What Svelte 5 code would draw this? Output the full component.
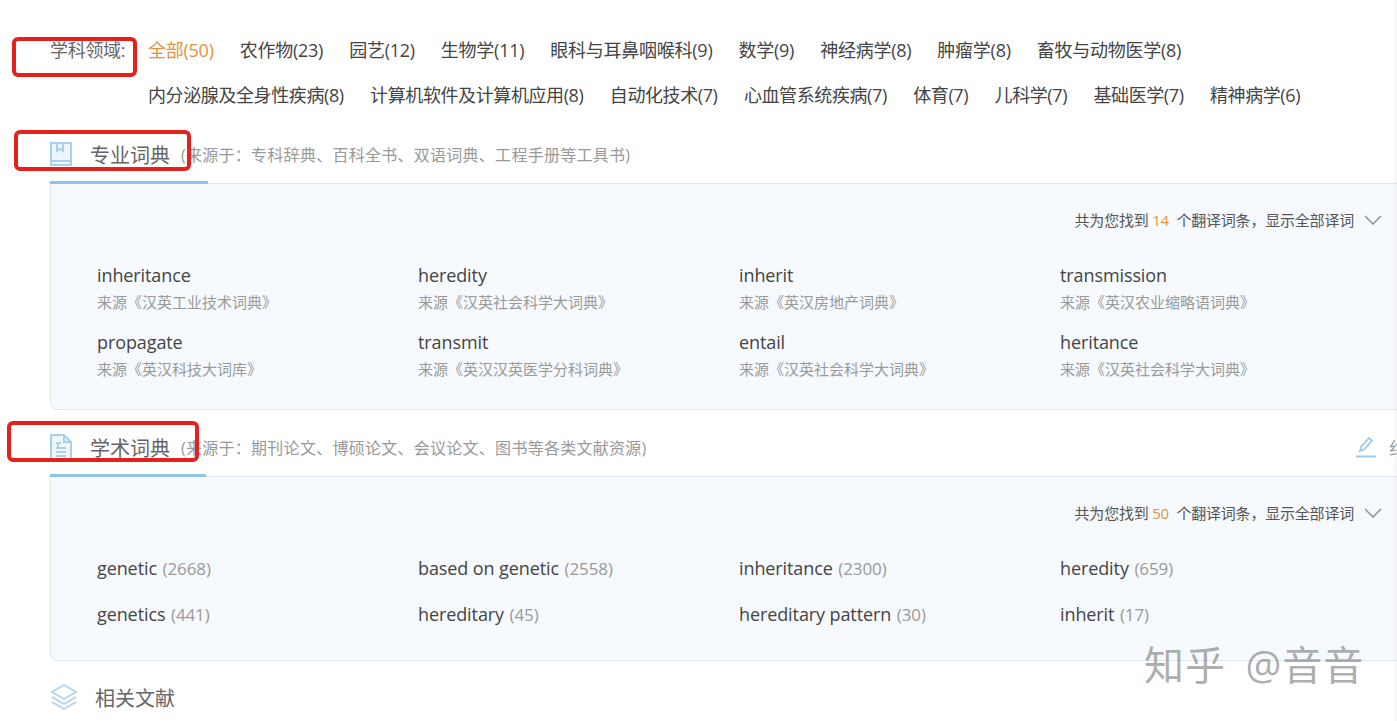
<script>
  const row1 = [['全部',50],['农作物',23],['园艺',12],['生物学',11],['眼科与耳鼻咽喉科',9],['数学',9],['神经病学',8],['肿瘤学',8],['畜牧与动物医学',8]];
  const row2 = [['内分泌腺及全身性疾病',8],['计算机软件及计算机应用',8],['自动化技术',7],['心血管系统疾病',7],['体育',7],['儿科学',7],['基础医学',7],['精神病学',6]];
  const dict = [
    ['inheritance','来源《汉英工业技术词典》'],['heredity','来源《汉英社会科学大词典》'],['inherit','来源《英汉房地产词典》'],['transmission','来源《英汉农业缩略语词典》'],
    ['propagate','来源《英汉科技大词库》'],['transmit','来源《英汉汉英医学分科词典》'],['entail','来源《汉英社会科学大词典》'],['heritance','来源《汉英社会科学大词典》']
  ];
  const terms = [['genetic',2668],['based on genetic',2558],['inheritance',2300],['heredity',659],['genetics',441],['hereditary',45],['hereditary pattern',30],['inherit',17]];
</script>

<div class="page">
  <div class="filter">
    <div class="label">学科领域:</div>
    <div class="rows">
      <div class="row r1">
        {#each row1 as [name, n], i}
          <span class:on={i===0}>{name}({n})</span>
        {/each}
      </div>
      <div class="row r2">
        {#each row2 as [name, n]}
          <span>{name}({n})</span>
        {/each}
      </div>
    </div>
  </div>

  <div class="head first">
    <svg class="ico" width="22" height="24" viewBox="0 0 22 24" fill="none" stroke="#a9cfec" stroke-width="2">
      <path d="M1 1h20v22H1z" fill="#eef5fb"/>
      <path d="M7 1v8l3-2 3 2V1" />
      <path d="M1 19h20" />
    </svg>
    <h2>专业词典</h2>
    <span class="src">(来源于：专科辞典、百科全书、双语词典、工程手册等工具书)</span>
  </div>
  <div class="panel one">
    <i class="tab t1"></i>
    <div class="total">
      <span>共为您找到 <b>14</b> &nbsp;个翻译词条，显示全部译词</span>
      <svg width="18" height="10" viewBox="0 0 18 10" fill="none" stroke="#8f959b" stroke-width="1.6"><path d="M1 1l8 8 8-8"/></svg>
    </div>
    <div class="grid dict">
      {#each dict as [w, s]}
        <div class="cell"><div class="w">{w}</div><div class="s">{s}</div></div>
      {/each}
    </div>
  </div>

  <div class="head second">
    <svg class="ico" width="22" height="26" viewBox="0 0 22 26" fill="none" stroke="#a9cfec" stroke-width="2">
      <path d="M1 1h13l7 7v17H1z" fill="#eef5fb"/>
      <path d="M14 1v7h7M6 9h5M8 9v4M6 14h10M6 18h10M6 22h10"/>
    </svg>
    <h2>学术词典</h2>
    <span class="src">(来源于：期刊论文、博硕论文、会议论文、图书等各类文献资源)</span>
    <div class="edit">
      <svg width="20" height="22" viewBox="0 0 20 22" fill="none" stroke="#9ccbeb" stroke-width="1.8">
        <path d="M4 15l1-4 8-9 3 2.5-8 9z"/>
        <path d="M0 20.5h20" stroke-width="2"/>
      </svg>
      <span>纠</span>
    </div>
  </div>
  <div class="panel two">
    <i class="tab t2"></i>
    <div class="total">
      <span>共为您找到 <b>50</b> &nbsp;个翻译词条，显示全部译词</span>
      <svg width="18" height="10" viewBox="0 0 18 10" fill="none" stroke="#8f959b" stroke-width="1.6"><path d="M1 1l8 8 8-8"/></svg>
    </div>
    <div class="grid terms">
      {#each terms as [w, n]}
        <div class="w">{w} <em>({n})</em></div>
      {/each}
    </div>
  </div>

  <div class="head third">
    <svg class="ico" width="28" height="28" viewBox="0 0 28 28" fill="none" stroke="#b3d3ee" stroke-width="1.8">
      <path d="M14 2l12 7-12 7L2 9z"/>
      <path d="M2 14l12 7 12-7"/>
      <path d="M2 19l12 7 12-7"/>
    </svg>
    <h2>相关文献</h2>
  </div>

  <div class="mark m1"></div>
  <div class="mark m2"></div>
  <div class="mark m3"></div>
  <div class="zhihu">知乎 @<span>音音</span></div>
  <div class="edge"></div>
</div>

<style>
  :global(body) { margin: 0; background: #fff; }
  .page {
    position: relative;
    width: 1397px;
    height: 721px;
    overflow: hidden;
    box-sizing: border-box;
    padding: 28px 0 0 50px;
    font-family: "Open Sans", "Noto Sans CJK SC", sans-serif;
    color: #444;
  }
  .filter { display: flex; font-size: 18px; line-height: 45px; }
  .label { width: 98px; color: #666; letter-spacing: -0.3px; }
  .row { display: flex; gap: 26px; white-space: nowrap; }
  .r1 { letter-spacing: -0.25px; }
  .r2 { letter-spacing: -0.4px; gap: 26.4px; }
  .on { color: #de9343; }

  .head { display: flex; align-items: center; height: 40px; }
  .head h2 { margin: 0; font-size: 20px; font-weight: 400; color: #666; }
  .head .ico { flex: none; }
  .src { margin-left: 11px; font-size: 16px; color: #999; letter-spacing: 0.27px; }
  .first { margin-top: 16px; }
  .first h2 { margin-left: 18px; }
  .second { margin-top: 17px; }
  .second h2 { margin-left: 18px; }
  .third { margin-top: 16px; }
  .third h2 { margin-left: 17px; }
  .edit { position: absolute; left: 1356px; display: flex; align-items: center; gap: 13px; color: #999; font-size: 18px; }

  .panel {
    position: relative;
    box-sizing: border-box;
    width: 1360px;
    background: #f6fafe;
    border: 1px solid #e1e6eb;
    border-radius: 0 0 0 8px;
  }
  .panel.one { height: 227px; margin-top: 9px; }
  .panel.two { height: 185px; margin-top: 9px; }
  .tab { position: absolute; left: -1px; top: -3px; height: 3px; background: #8fc3e8; }
  .t1 { width: 158px; }
  .t2 { width: 156px; }
  .total {
    display: flex;
    align-items: center;
    justify-content: flex-end;
    padding: 25px 0 0 0;
    width: 1331px;
    font-size: 15px;
    line-height: 22px;
    letter-spacing: -0.2px;
    color: #555;
    white-space: pre;
  }
  .total b { font-weight: 400; color: #de9343; }
  .total svg { margin-left: 10px; }

  .grid { display: grid; grid-template-columns: repeat(4, 321px); padding-left: 46px; }
  .dict { margin-top: 29px; row-gap: 13px; }
  .terms { margin-top: 29px; row-gap: 15px; }
  .w { font-size: 18px; line-height: 30px; color: #444; letter-spacing: -0.1px; }
  .w em { font-style: normal; font-size: 17px; color: #999; margin-left: 1px; }
  .s { font-size: 15px; line-height: 24px; color: #999; }

  .mark { position: absolute; border: 4px solid #e5211d; border-radius: 6px; box-sizing: border-box; }
  .m1 { left: 12px; top: 37px; width: 125px; height: 40px; }
  .m2 { left: 14px; top: 130px; width: 177px; height: 41px; }
  .m3 { left: 7px; top: 421px; width: 192px; height: 41px; }

  .zhihu {
    position: absolute;
    left: 1144px;
    top: 642px;
    font-size: 40px;
    line-height: 46px;
    letter-spacing: 1px;
    word-spacing: 8px;
    color: rgba(120, 120, 120, 0.6);
    white-space: nowrap;
  }
  .edge { position: absolute; right: 0; top: 0; bottom: 0; width: 3px; background: rgba(230, 230, 230, 0.3); }
</style>
